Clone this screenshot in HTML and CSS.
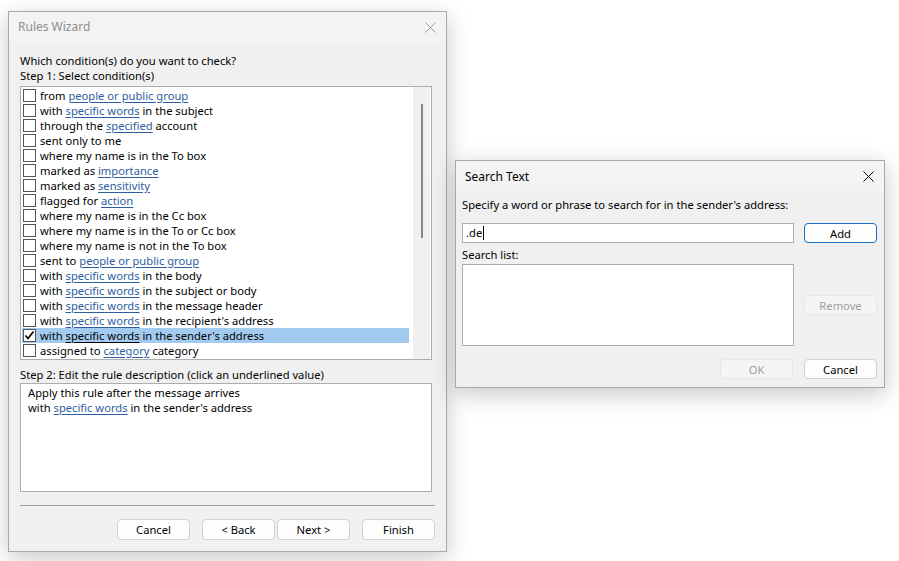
FILE: index.html
```html
<!DOCTYPE html>
<html lang="en">
<head>
<meta charset="UTF-8" />
<title>Rules Wizard</title>
<link rel="stylesheet" href="styles.css">
</head>
<body>

<div class="window rules">
  <div class="titlebar inactive">
    <span class="title">Rules Wizard</span>
    <svg class="close" width="11" height="11" viewBox="0 0 11 11"><path d="M0.5 0.5 L10.5 10.5 M10.5 0.5 L0.5 10.5" /></svg>
  </div>
  <div class="content">
    <div class="label">Which condition(s) do you want to check?</div>
    <div class="label">Step 1: Select condition(s)</div>

    <div class="listbox conditions">
      <div class="rows">
        <div class="row"><span class="cb"></span>from <a>people or public group</a></div>
        <div class="row"><span class="cb"></span>with <a>specific words</a> in the subject</div>
        <div class="row"><span class="cb"></span>through the <a>specified</a> account</div>
        <div class="row"><span class="cb"></span>sent only to me</div>
        <div class="row"><span class="cb"></span>where my name is in the To box</div>
        <div class="row"><span class="cb"></span>marked as <a>importance</a></div>
        <div class="row"><span class="cb"></span>marked as <a>sensitivity</a></div>
        <div class="row"><span class="cb"></span>flagged for <a>action</a></div>
        <div class="row"><span class="cb"></span>where my name is in the Cc box</div>
        <div class="row"><span class="cb"></span>where my name is in the To or Cc box</div>
        <div class="row"><span class="cb"></span>where my name is not in the To box</div>
        <div class="row"><span class="cb"></span>sent to <a>people or public group</a></div>
        <div class="row"><span class="cb"></span>with <a>specific words</a> in the body</div>
        <div class="row"><span class="cb"></span>with <a>specific words</a> in the subject or body</div>
        <div class="row"><span class="cb"></span>with <a>specific words</a> in the message header</div>
        <div class="row"><span class="cb"></span>with <a>specific words</a> in the recipient's address</div>
        <div class="row selected"><span class="cb"><svg width="11" height="11" viewBox="0 0 11 11"><path d="M1.5 5.5 L4 8.5 L9.5 1.5" /></svg></span>with <a>specific words</a> in the sender's address</div>
        <div class="row"><span class="cb"></span>assigned to <a>category</a> category</div>
      </div>
      <div class="scrollbar"><div class="thumb"></div></div>
    </div>

    <div class="label step2">Step 2: Edit the rule description (click an underlined value)</div>
    <div class="listbox description">
      <div>Apply this rule after the message arrives</div>
      <div>with <a>specific words</a> in the sender's address</div>
    </div>

    <hr class="separator">

    <div class="buttons">
      <button class="btn">Cancel</button>
      <div class="pair">
        <button class="btn">&lt; Back</button>
        <button class="btn">Next &gt;</button>
      </div>
      <button class="btn">Finish</button>
    </div>
  </div>
</div>

<div class="window search">
  <div class="titlebar">
    <span class="title">Search Text</span>
    <svg class="close" width="11" height="11" viewBox="0 0 11 11"><path d="M0.5 0.5 L10.5 10.5 M10.5 0.5 L0.5 10.5" /></svg>
  </div>
  <div class="content">
    <div class="label">Specify a word or phrase to search for in the sender's address:</div>
    <div class="entry-row">
      <div class="textbox">.de<span class="caret"></span></div>
      <button class="btn default">Add</button>
    </div>
    <div class="label list-label">Search list:</div>
    <div class="list-row">
      <div class="listbox words"></div>
      <button class="btn" disabled>Remove</button>
    </div>
    <div class="footer">
      <button class="btn" disabled>OK</button>
      <button class="btn">Cancel</button>
    </div>
  </div>
</div>

</body>
</html>
```

FILE: styles.css
```css
html, body {
  margin: 0;
  padding: 0;
}
body {
  width: 899px;
  height: 561px;
  overflow: hidden;
  position: relative;
  background: #fff;
  font-family: "Noto Sans", "Open Sans", sans-serif;
  font-size: 11.2px;
  color: #000;
}
a {
  color: #2e5e9f;
  text-decoration: underline;
  text-underline-offset: 2px;
}

/* windows sit on the desktop at fixed spots */
.window {
  position: absolute;
  box-sizing: border-box;
  background: #f0f0f0;
  border: 1px solid #a9a9a9;
  box-shadow: 0 6px 22px rgba(0,0,0,0.22);
}
.rules {
  left: 8px;
  top: 11px;
  width: 439px;
  height: 541px;
}
.search {
  left: 455px;
  top: 160px;
  width: 430px;
  height: 228px;
}

.titlebar {
  height: 30px;
  background: #f3f3f3;
  display: flex;
  align-items: center;
  justify-content: space-between;
  padding: 0 10px 0 9px;
  font-size: 12px;
}
.titlebar .title {
  color: #000;
  margin-top: -2px;
}
.search .titlebar .title {
  margin-top: 0;
}
.titlebar.inactive .title {
  color: #8e8e8e;
}
.close path {
  stroke: #000;
  stroke-width: 1;
  fill: none;
}
.titlebar.inactive .close path {
  stroke: #9a9a9a;
}

.label {
  line-height: 15px;
}

/* Rules Wizard */
.rules .content {
  padding: 11px 11px 0 11px;
}
.listbox {
  box-sizing: border-box;
  background: #fff;
  border: 1px solid #adadad;
}
.conditions {
  margin-top: 3px;
  width: 412px;
  height: 274px;
  display: flex;
  padding: 1px 1px 0 1px;
}
.rows {
  flex: 1;
  padding-right: 4px;
}
.row {
  height: 15px;
  line-height: 14px;
  display: flex;
  align-items: center;
  white-space: pre;
}
.row.selected {
  background: #a3cbef;
}
.row.selected a {
  color: #000;
}
.cb {
  box-sizing: border-box;
  width: 13px;
  height: 13px;
  border: 1px solid #555;
  background: #fff;
  margin: 0 4px 0 1px;
  display: flex;
  align-items: center;
  justify-content: center;
}
.cb path {
  stroke: #000;
  stroke-width: 1.7;
  fill: none;
}
.scrollbar {
  width: 17px;
  margin-top: -1px;
  background: #f0f0f0;
  display: flex;
  justify-content: center;
  padding-top: 17px;
  box-sizing: border-box;
}
.thumb {
  width: 2px;
  height: 134px;
  background: #858585;
}

.step2 {
  margin-top: 7px;
}
.description {
  margin-top: 1px;
  width: 412px;
  height: 109px;
  padding: 1px 7px;
  line-height: 15px;
}

.separator {
  border: none;
  border-top: 1px solid #a0a0a0;
  margin: 13px 0 0 0;
  width: 415px;
}

.buttons {
  display: flex;
  justify-content: flex-end;
  gap: 12px;
  margin-top: 13px;
}
.pair {
  display: flex;
  gap: 2px;
}
.btn {
  box-sizing: border-box;
  width: 73px;
  height: 21px;
  padding: 0;
  font-family: inherit;
  font-size: 11.2px;
  color: #000;
  background: #fdfdfd;
  border: 1px solid #d0d0d0;
  border-radius: 4px;
}
.search .btn {
  height: 20px;
}
.btn.default {
  border-color: #1a6fc6;
}
.btn:disabled {
  background: #f5f5f5;
  border-color: #e6e6e6;
  color: #a0a0a0;
}

/* Search Text */
.search .content {
  padding: 6px 7px 0 6px;
}
.entry-row {
  display: flex;
  justify-content: space-between;
  margin-top: 11px;
}
.textbox {
  box-sizing: border-box;
  width: 332px;
  height: 20px;
  background: #fff;
  border: 1px solid #adadad;
  padding: 0 3px;
  line-height: 18px;
  display: flex;
  align-items: center;
}
.caret {
  width: 1px;
  height: 14px;
  background: #000;
  margin-left: 1px;
}
.list-label {
  margin-top: 4px;
}
.list-row {
  display: flex;
  justify-content: space-between;
  align-items: center;
  margin-top: 2px;
}
.words {
  width: 332px;
  height: 82px;
}
.footer {
  display: flex;
  justify-content: flex-end;
  gap: 11px;
  margin-top: 13px;
}
```
